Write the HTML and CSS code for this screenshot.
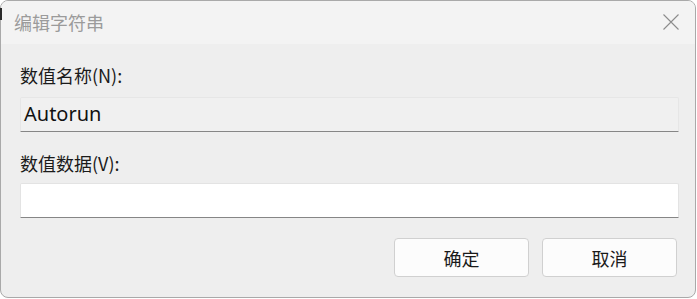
FILE: index.html
```html
<!DOCTYPE html>
<html lang="zh-CN">
<head>
<meta charset="utf-8">
<title>编辑字符串</title>
<link rel="stylesheet" href="styles.css">
</head>
<body>
<div class="behind"></div>
<div class="window">
  <div class="titlebar">
    <span class="title">编辑字符串</span>
    <button class="close" aria-label="关闭">
      <svg width="16" height="16" viewBox="0 0 16 16"><path d="M0.5 0.5 L15.5 15.5 M15.5 0.5 L0.5 15.5" stroke="#8c8c8c" stroke-width="1.1" fill="none"/></svg>
    </button>
  </div>
  <div class="content">
    <label class="label">数值名称(N):</label>
    <div class="field readonly">Autorun</div>
    <label class="label second">数值数据(V):</label>
    <div class="field editable"></div>
    <div class="buttons">
      <button class="btn">确定</button>
      <button class="btn">取消</button>
    </div>
  </div>
</div>
</body>
</html>
```
FILE: styles.css
```css
html, body {
  margin: 0;
  padding: 0;
  background: #ffffff;
}
body {
  width: 697px;
  height: 299px;
  position: relative;
  overflow: hidden;
  font-family: "Noto Sans CJK SC", "Noto Sans", sans-serif;
}
.behind {
  position: absolute;
  left: 0;
  top: 8px;
  width: 2px;
  height: 12px;
  background: #2a2a2a;
  z-index: 2;
}
.window {
  box-sizing: border-box;
  width: 696px;
  height: 298px;
  border: 1px solid #a9a9a9;
  border-radius: 8px;
  overflow: hidden;
  background: #eeeeee;
  display: flex;
  flex-direction: column;
}
.titlebar {
  height: 43px;
  background: #f3f3f3;
  display: flex;
  align-items: center;
  justify-content: space-between;
  padding: 0 16px 0 13px;
  flex: none;
}
.title {
  font-size: 18px;
  color: #9b9b9b;
  line-height: 24px;
  margin-top: -2px;
}
.close {
  border: none;
  background: transparent;
  padding: 0;
  width: 16px;
  height: 16px;
  display: flex;
  margin-top: -1px;
}
.content {
  display: flex;
  flex-direction: column;
  padding: 19px 16px 0 19px;
}
.label {
  font-size: 18px;
  line-height: 24px;
  color: #1a1a1a;
  height: 24px;
}
.field {
  box-sizing: border-box;
  height: 35px;
  margin-top: 10px;
  border: 1px solid #e3e3e3;
  border-bottom: 1px solid #868686;
  border-radius: 2px 2px 0 0;
  font-family: "Noto Sans", sans-serif;
  font-size: 20px;
  line-height: 32px;
  padding-left: 3px;
  color: #111111;
}
.readonly {
  background: #f0f0f0;
  border-color: #e6e6e6 #e6e6e6 #868686 #e6e6e6;
}
.editable {
  background: #ffffff;
  margin-top: 8px;
}
.second {
  margin-top: 19px;
}
.buttons {
  display: flex;
  justify-content: flex-end;
  gap: 13px;
  margin-top: 20px;
  padding-right: 2px;
}
.btn {
  box-sizing: border-box;
  width: 135px;
  height: 39px;
  background: #fcfcfc;
  border: 1px solid #d0d0d0;
  border-radius: 4px;
  font-family: "Noto Sans CJK SC", sans-serif;
  font-size: 18px;
  color: #1a1a1a;
  padding: 0;
}
```
